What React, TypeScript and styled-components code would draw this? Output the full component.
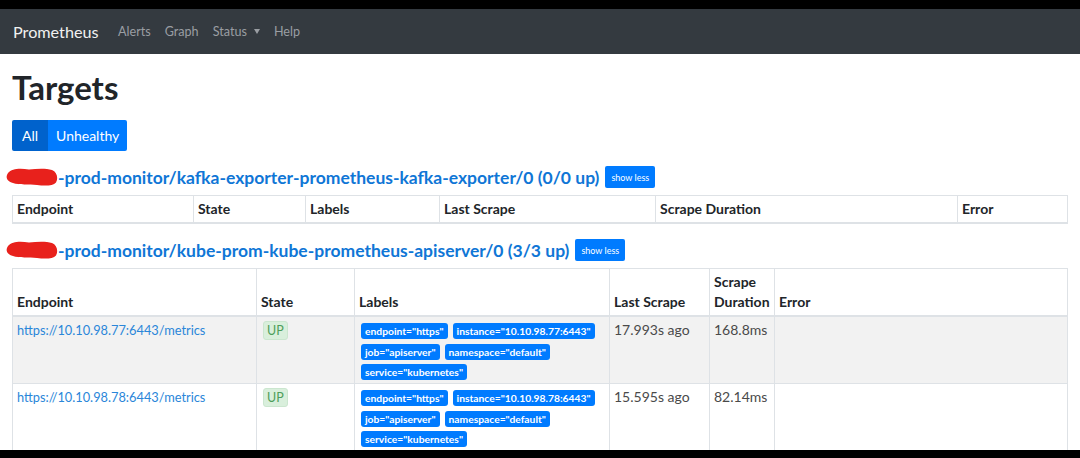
import React from 'react';
import styled, { createGlobalStyle } from 'styled-components';

const GlobalStyle = createGlobalStyle`
  html, body {
    margin: 0;
    padding: 0;
    background: #000;
  }
  body {
    font-family: Lato, "Liberation Sans", sans-serif;
    color: #212529;
  }
  * {
    box-sizing: border-box;
  }
`;

const Screen = styled.div`
  width: 1080px;
  height: 458px;
  padding: 9px 0 8px;
  background: #000;
`;

const Viewport = styled.div`
  height: 441px;
  overflow: hidden;
  background: #fff;
`;

const Navbar = styled.nav`
  height: 45px;
  display: flex;
  align-items: center;
  padding: 0 13px;
  background: #343a40;
`;

const Brand = styled.a`
  font-size: 16.2px;
  color: #f1f1f1;
  margin-right: 12.5px;
`;

const NavLink = styled.a`
  display: flex;
  align-items: center;
  font-size: 12.6px;
  color: #9a9ea3;
  padding: 0 7px;
`;

const Caret = styled.span`
  display: inline-block;
  margin-left: 7px;
  border-top: 5px solid #9a9ea3;
  border-left: 3.5px solid transparent;
  border-right: 3.5px solid transparent;
`;

const Main = styled.main`
  padding: 0 13px 0 12px;
`;

const Title = styled.h1`
  margin: 13px 0 13px;
  font-size: 33px;
  line-height: 40px;
  font-weight: 700;
  color: #212529;
`;

const ButtonGroup = styled.div`
  display: flex;
  width: max-content;
  border-radius: 2px;
  overflow: hidden;
`;

const FilterButton = styled.button<{ $active?: boolean }>`
  height: 31px;
  padding: 0 ${p => (p.$active ? 10 : 8)}px;
  border: none;
  font-family: inherit;
  font-size: 14px;
  color: #fff;
  background: ${p => (p.$active ? '#0062cc' : '#007bff')};
`;

const Pool = styled.section`
  margin-top: 15px;
`;

const PoolHeader = styled.div`
  display: flex;
  align-items: center;
  gap: 6px;
  height: 22px;
  margin-bottom: 7px;
`;

const PoolName = styled.a`
  display: flex;
  align-items: center;
  font-size: 17.5px;
  font-weight: 700;
  color: #0f76d6;
  margin-left: -7px;
`;

const Scribble = styled.svg`
  flex: none;
`;

const ShowLess = styled.button`
  height: 22px;
  padding: 0 6px;
  border: none;
  border-radius: 2px;
  font-family: inherit;
  font-size: 9px;
  color: #fff;
  background: #007bff;
`;

const Table = styled.table`
  width: 100%;
  table-layout: fixed;
  border-collapse: collapse;
  border: 1px solid #dee2e6;
`;

const Th = styled.th`
  text-align: left;
  vertical-align: bottom;
  padding: 3px 4px;
  border: 1px solid #dee2e6;
  border-bottom-width: 2px;
  font-size: 14px;
  line-height: 20px;
  font-weight: 700;
  color: #212529;
`;

const Row = styled.tr<{ $striped?: boolean }>`
  background: ${p => (p.$striped ? '#f2f2f2' : '#fff')};
`;

const Td = styled.td`
  vertical-align: top;
  padding: 3px 4px 2px;
  border: 1px solid #dee2e6;
  font-size: 14px;
  line-height: 20.3px;
  color: #4a4a4a;
`;

const EndpointLink = styled.a`
  color: #2a86d9;
  font-size: 12.8px;
`;

const StateBadge = styled.span`
  display: inline-block;
  padding: 0 3px;
  line-height: 17px;
  border: 1px solid #cbe6cf;
  border-radius: 3px;
  background: #d9efdc;
  color: #4e9e5a;
  font-size: 12.5px;
  margin-left: 2px;
`;

const LabelBadge = styled.span`
  display: inline-block;
  padding: 2px 4px;
  margin: 0 3px 0 2px;
  border-radius: 3px;
  background: #007bff;
  color: #fff;
  font-size: 10.3px;
  font-weight: 700;
  line-height: 12px;
  vertical-align: middle;
`;

const Col = styled.col<{ $w: number }>`
  width: ${p => p.$w}px;
`;

interface Target {
  endpoint: string;
  instance: string;
  lastScrape: string;
  duration: string;
}

interface ScrapePool {
  name: string;
  up: string;
  cols: number[];
  targets: Target[];
}

const pools: ScrapePool[] = [
  {
    name: '-prod-monitor/kafka-exporter-prometheus-kafka-exporter/0',
    up: '(0/0 up)',
    cols: [181, 112, 134, 216, 302, 110],
    targets: [],
  },
  {
    name: '-prod-monitor/kube-prom-kube-prometheus-apiserver/0',
    up: '(3/3 up)',
    cols: [244, 98, 255, 100, 65, 293],
    targets: [
      { endpoint: 'https://10.10.98.77:6443/metrics', instance: '10.10.98.77:6443', lastScrape: '17.993s ago', duration: '168.8ms' },
      { endpoint: 'https://10.10.98.78:6443/metrics', instance: '10.10.98.78:6443', lastScrape: '15.595s ago', duration: '82.14ms' },
    ],
  },
];

// hand-drawn marker smear over the namespace prefix
function RedMark() {
  return (
    <Scribble width="53" height="20" viewBox="0 0 53 20">
      <path
        d="M3 6 C7 1 16 1 24 2.5 C32 1.5 41 1 47 3 C52 5 53.5 11 51 15.5 C48 19 40 19 32 18 C24 17.5 14 18 8 16 C2 14.5 0 10 3 6 Z"
        fill="#e8211c"
      />
    </Scribble>
  );
}

function App() {
  return (
    <>
      <GlobalStyle />
      <Screen>
        <Viewport>
          <Navbar>
            <Brand>Prometheus</Brand>
            <NavLink>Alerts</NavLink>
            <NavLink>Graph</NavLink>
            <NavLink>Status<Caret /></NavLink>
            <NavLink>Help</NavLink>
          </Navbar>
          <Main>
            <Title>Targets</Title>
            <ButtonGroup>
              <FilterButton $active>All</FilterButton>
              <FilterButton>Unhealthy</FilterButton>
            </ButtonGroup>
            {pools.map(pool => (
              <Pool key={pool.name}>
                <PoolHeader>
                  <PoolName>
                    <RedMark />
                    {pool.name} {pool.up}
                  </PoolName>
                  <ShowLess>show less</ShowLess>
                </PoolHeader>
                <Table>
                  <colgroup>
                    {pool.cols.map((w, i) => <Col key={i} $w={w} />)}
                  </colgroup>
                  <thead>
                    <tr>
                      <Th>Endpoint</Th>
                      <Th>State</Th>
                      <Th>Labels</Th>
                      <Th>Last Scrape</Th>
                      <Th>Scrape Duration</Th>
                      <Th>Error</Th>
                    </tr>
                  </thead>
                  <tbody>
                    {pool.targets.map((t, i) => (
                      <Row key={t.endpoint} $striped={i % 2 === 0}>
                        <Td><EndpointLink>{t.endpoint}</EndpointLink></Td>
                        <Td><StateBadge>UP</StateBadge></Td>
                        <Td>
                          <LabelBadge>endpoint="https"</LabelBadge>
                          <LabelBadge>instance="{t.instance}"</LabelBadge>
                          <LabelBadge>job="apiserver"</LabelBadge>
                          <LabelBadge>namespace="default"</LabelBadge>
                          <LabelBadge>service="kubernetes"</LabelBadge>
                        </Td>
                        <Td>{t.lastScrape}</Td>
                        <Td>{t.duration}</Td>
                        <Td></Td>
                      </Row>
                    ))}
                  </tbody>
                </Table>
              </Pool>
            ))}
          </Main>
        </Viewport>
      </Screen>
    </>
  );
}

export default App;
